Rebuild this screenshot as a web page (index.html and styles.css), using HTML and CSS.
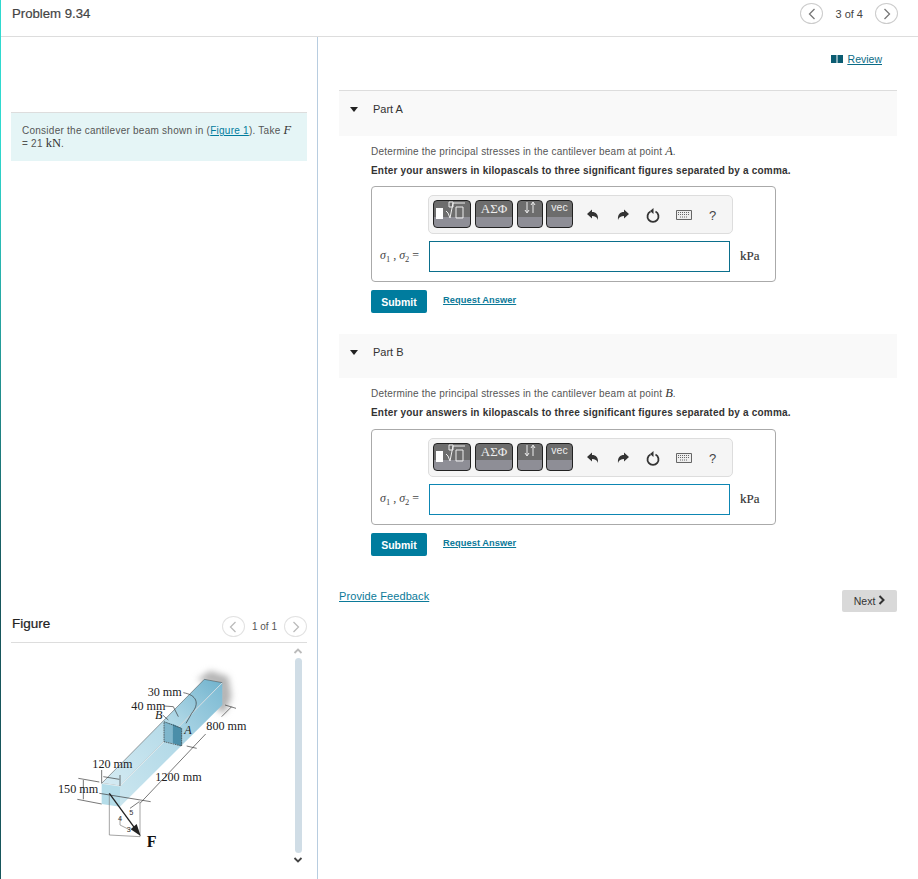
FILE: index.html
```html
<!DOCTYPE html>
<html lang="en">
<head>
<meta charset="utf-8">
<title>Problem 9.34</title>
<link rel="stylesheet" href="styles.css">
</head>
<body>
<div class="app">
  <header class="topbar">
    <h1 class="title">Problem 9.34</h1>
    <nav class="pager">
      <span class="circle"><svg width="8" height="12" viewBox="0 0 8 12"><path d="M6.500 1 1.500 6l5 5" class="chev"/></svg></span>
      <span class="pager-text">3 of 4</span>
      <span class="circle"><svg width="8" height="12" viewBox="0 0 8 12"><path d="M1.500 1l5 5-5 5" class="chev"/></svg></span>
    </nav>
  </header>
  <div class="panes">
    <aside class="left">
      <div class="intro">Consider the cantilever beam shown in (<a href="#" class="link">Figure 1</a>). Take <i class="math big">F</i><br>= 21 <span class="math big">kN</span>.</div>
      <div class="figure-head">
        <h2 class="figure-title">Figure</h2>
        <div class="pager small">
          <span class="circle faint"><svg width="8" height="12" viewBox="0 0 8 12"><path d="M6.500 1 1.500 6l5 5" class="chev light"/></svg></span>
          <span class="pager-text tiny">1 of 1</span>
          <span class="circle faint"><svg width="8" height="12" viewBox="0 0 8 12"><path d="M1.500 1l5 5-5 5" class="chev light"/></svg></span>
        </div>
      </div>
      <div class="figure-body">
        <svg class="beam" width="220" height="200" viewBox="0 0 660 600">
          <defs>
            <filter id="bl" x="-50%" y="-50%" width="200%" height="200%"><feGaussianBlur stdDeviation="9"/></filter>
            <linearGradient id="side" x1="0" y1="1" x2="1" y2="0"><stop offset="0" stop-color="#cbe6ef"/><stop offset="0.5" stop-color="#b4dae8"/><stop offset="1" stop-color="#7cbad3"/></linearGradient>
            <linearGradient id="top" x1="0" y1="1" x2="1" y2="0"><stop offset="0" stop-color="#d5ebf3"/><stop offset="0.6" stop-color="#b2d9e7"/><stop offset="1" stop-color="#6fb2cd"/></linearGradient>
          </defs>
          <path d="M470 60 510 32 565 50 575 110 555 160 530 150 535 75Z" fill="#b4b4b4" filter="url(#bl)"/>
          <path d="M185 370 493 58 547 68 240 378Z" fill="url(#top)" stroke="#444" stroke-width="1.500"/>
          <path d="M240 378 547 68 547 135 240 440Z" fill="url(#side)"/>
          <path d="M185 370 240 378 240 440 185 432Z" fill="#b5dde9"/>
          <path d="M240 378 547 68" stroke="#fff" stroke-width="2" fill="none"/>
          <path d="M185 370 240 378" stroke="#fff" stroke-width="2"/>
          <path d="M372 185 398 192 398 250 372 245Z" fill="#7fb6cc"/>
          <path d="M398 192 425 205 425 258 398 250Z" fill="#4a8ea9"/>
          <path d="M372 185 425 205 425 258 372 245Z" fill="none" stroke="#333" stroke-width="2" stroke-dasharray="5 2"/>
          <g fill="none" stroke="#333" stroke-width="2">
            <path d="M430 98C470 105 480 130 455 160L438 190"/>
            <path d="M372 138 400 140 415 170"/>
            <path d="M368 165 385 180"/>
            <path d="M300 430 497 222"/>
            <path d="M545 170 575 140M555 135 588 145"/>
            <path d="M440 258 470 265"/>
            <path d="M115 355 178 366M112 418 185 432M130 360V418"/>
            <path d="M185 330V370M240 345V378M190 350 238 358"/>
            <path d="M178 400 332 425"/>
            <path d="M270 445 298 425"/>
          </g>
          <g fill="none" stroke="#777" stroke-width="2">
            <path d="M208 400V525L300 530V425"/>
            <path d="M240 470V495L270 510"/>
          </g>
          <path d="M208 400 292 515" stroke="#222" stroke-width="4"/>
          <path d="M302 528 272 508 290 492Z" fill="#222"/>
          <g class="dim">
            <text x="323" y="107">30 mm</text>
            <text x="274" y="149">40 mm</text>
            <text x="345" y="178" font-style="italic">B</text>
            <text x="433" y="223" font-style="italic">A</text>
            <text x="499" y="210">800 mm</text>
            <text x="157" y="325">120 mm</text>
            <text x="346" y="364">1200 mm</text>
            <text x="54" y="399">150 mm</text>
          </g>
          <text class="tiny-num" x="268" y="464">5</text>
          <text class="tiny-num" x="234" y="482">4</text>
          <text class="tiny-num" x="260" y="516">3</text>
          <text class="force" x="320" y="562">F</text>
        </svg>
        <div class="scroll">
          <svg width="10" height="8" viewBox="0 0 10 8"><path d="M1.500 6 5 2.500 8.500 6" class="arrow up"/></svg>
          <span class="thumb"></span>
          <svg width="10" height="8" viewBox="0 0 10 8"><path d="M1.500 2 5 5.500 8.500 2" class="arrow"/></svg>
        </div>
      </div>
    </aside>
    <main class="right">
      <div class="review"><a href="#" class="review-link"><svg class="book" width="12" height="8" viewBox="0 0 12 8"><path d="M0 0h5.500v8H0zM6.500 0H12v8H6.500z" fill="#0b5c72"/></svg><span class="review-text">Review</span></a></div>

      <section class="part">
        <div class="part-head"><span class="tri"></span><span>Part A</span></div>
        <div class="part-body">
          <p class="q">Determine the principal stresses in the cantilever beam at point <i class="math big">A</i>.</p>
          <p class="ins">Enter your answers in kilopascals to three significant figures separated by a comma.</p>
          <div class="answer">
            <div class="toolbar">
              <span class="tb w38"><span class="sq"></span><svg width="24" height="18" viewBox="0 0 24 18"><path d="M5 1h4v5H5zM2 10l2 2 2 5 3-15h12M12 6h7v11h-7z" fill="none" stroke="#eee" stroke-width="1"/></svg></span>
              <span class="tb w38 sym">ΑΣΦ</span>
              <span class="tb w26"><svg width="14" height="14" viewBox="0 0 14 14"><path d="M4 1v10M2 9l2 3 2-3M10 12V2M8 4l2-3 2 3" fill="none" stroke="#eee" stroke-width="1"/></svg></span>
              <span class="tb w27 vec">vec</span>
              <div class="tools">
                <svg width="14" height="14" viewBox="0 0 14 14"><path d="M1 6 6 1.500V4c4 0 6.500 2.500 6 8-1-3-3-4-6-4v2.500Z" fill="#333"/></svg>
                <svg width="14" height="14" viewBox="0 0 14 14"><path d="M13 6 8 1.500V4c-4 0-6.500 2.500-6 8 1-3 3-4 6-4v2.500Z" fill="#333"/></svg>
                <svg width="14" height="16" viewBox="0 0 14 16"><path d="M4.500 4.500a5.500 5.500 0 1 0 5 0" fill="none" stroke="#333" stroke-width="1.800"/><path d="M7.500 1v6L4 4Z" fill="#333"/></svg>
                <svg width="16" height="10" viewBox="0 0 16 10"><path d="M.5.500h15v9H.5z" fill="#eee" stroke="#666"/><path d="M2 2.500h12M2 4.500h12M4 7h8" stroke="#666" stroke-dasharray="1 1"/></svg>
                <span class="help">?</span>
              </div>
            </div>
            <div class="row">
              <span class="label"><i>σ</i><sub>1</sub> , <i>σ</i><sub>2</sub> =</span>
              <input class="field" type="text" aria-label="answer A">
              <span class="unit">kPa</span>
            </div>
          </div>
          <div class="actions"><button class="submit">Submit</button><a href="#" class="req">Request Answer</a></div>
        </div>
      </section>

      <section class="part">
        <div class="part-head"><span class="tri"></span><span>Part B</span></div>
        <div class="part-body">
          <p class="q">Determine the principal stresses in the cantilever beam at point <i class="math big">B</i>.</p>
          <p class="ins">Enter your answers in kilopascals to three significant figures separated by a comma.</p>
          <div class="answer">
            <div class="toolbar">
              <span class="tb w38"><span class="sq"></span><svg width="24" height="18" viewBox="0 0 24 18"><path d="M5 1h4v5H5zM2 10l2 2 2 5 3-15h12M12 6h7v11h-7z" fill="none" stroke="#eee" stroke-width="1"/></svg></span>
              <span class="tb w38 sym">ΑΣΦ</span>
              <span class="tb w26"><svg width="14" height="14" viewBox="0 0 14 14"><path d="M4 1v10M2 9l2 3 2-3M10 12V2M8 4l2-3 2 3" fill="none" stroke="#eee" stroke-width="1"/></svg></span>
              <span class="tb w27 vec">vec</span>
              <div class="tools">
                <svg width="14" height="14" viewBox="0 0 14 14"><path d="M1 6 6 1.500V4c4 0 6.500 2.500 6 8-1-3-3-4-6-4v2.500Z" fill="#333"/></svg>
                <svg width="14" height="14" viewBox="0 0 14 14"><path d="M13 6 8 1.500V4c-4 0-6.500 2.500-6 8 1-3 3-4 6-4v2.500Z" fill="#333"/></svg>
                <svg width="14" height="16" viewBox="0 0 14 16"><path d="M4.500 4.500a5.500 5.500 0 1 0 5 0" fill="none" stroke="#333" stroke-width="1.800"/><path d="M7.500 1v6L4 4Z" fill="#333"/></svg>
                <svg width="16" height="10" viewBox="0 0 16 10"><path d="M.5.500h15v9H.5z" fill="#eee" stroke="#666"/><path d="M2 2.500h12M2 4.500h12M4 7h8" stroke="#666" stroke-dasharray="1 1"/></svg>
                <span class="help">?</span>
              </div>
            </div>
            <div class="row">
              <span class="label"><i>σ</i><sub>1</sub> , <i>σ</i><sub>2</sub> =</span>
              <input class="field focus" type="text" aria-label="answer B">
              <span class="unit">kPa</span>
            </div>
          </div>
          <div class="actions"><button class="submit">Submit</button><a href="#" class="req">Request Answer</a></div>
        </div>
      </section>

      <div class="foot">
        <a href="#" class="feedback">Provide Feedback</a>
        <button class="next">Next <svg width="7" height="10" viewBox="0 0 7 10"><path d="M1.500 1l4 4-4 4" fill="none" stroke="#333" stroke-width="2"/></svg></button>
      </div>
    </main>
  </div>
</div>
</body>
</html>
```

FILE: styles.css
```css
* { box-sizing: border-box; }
html, body { margin: 0; height: 100%; }
body { font-family: "Liberation Sans", Arial, sans-serif; color: #333; background: #fff; overflow: hidden; }
.app { height: 879px; display: flex; flex-direction: column; padding-left: 1px; background: linear-gradient(90deg, transparent 1px, #fff 1px), linear-gradient(#2fd9cf 0, #2fd9cf 140px, #17565c 580px); }
.topbar { height: 37px; flex: none; display: flex; align-items: flex-start; justify-content: space-between; padding: 5px 20px 0 11px; border-bottom: 1px solid #ddd; }
.title { margin: 0; font-size: 13.200px; line-height: 17px; font-weight: 400; color: #444; -webkit-text-stroke: .2px #444; }
.pager { display: flex; align-items: center; gap: 12px; margin-top: -2px; }
.pager-text { font-size: 11px; color: #444; }
.circle { width: 23px; height: 21px; border: 1px solid #ccc; border-radius: 50%; display: flex; align-items: center; justify-content: center; }
.chev { fill: none; stroke: #777; stroke-width: 1.300; }
.panes { flex: 1; display: flex; min-height: 0; }
.left { width: 317px; flex: none; border-right: 1.500px solid #b8cde0; display: flex; flex-direction: column; padding: 75px 10px 0 10px; }
.intro { height: 49px; background: #e5f5f6; border-top: 1px solid #ddd; padding: 11px 11px 0; font-size: 10px; line-height: 12px; letter-spacing: .25px; color: #555; }
.link { color: #007c9e; }
.math { font-family: "Liberation Serif", serif; }
.big { font-size: 12.500px; letter-spacing: 0; color: #333; }
.figure-head { margin-top: 453px; height: 29px; display: flex; align-items: flex-start; justify-content: space-between; border-bottom: 1px solid #ddd; padding-left: 1px; }
.figure-title { margin: 0; font-size: 13.500px; line-height: 19px; font-weight: 400; color: #222; -webkit-text-stroke: .2px #222; }
.small { margin-top: 2px; gap: 7px; }
.tiny { font-size: 10px; color: #555; }
.faint { border-color: #e2e2e2; }
.light { stroke: #bbb; }
.figure-body { flex: 1; display: flex; justify-content: space-between; min-height: 0; }
.beam { margin: 17px 0 0 29px; }
.dim text { font-family: "Liberation Serif", serif; font-size: 36.500px; fill: #222; }
.tiny-num { font-family: "Liberation Sans", sans-serif; font-size: 22px; fill: #333; }
.force { font-family: "Liberation Serif", serif; font-size: 48px; font-weight: 700; fill: #111; }
.scroll { width: 12px; margin: 4px 3px 0 0; display: flex; flex-direction: column; align-items: center; gap: 3px; }
.thumb { width: 7px; height: 195px; background: #d0dde6; border-radius: 4px; }
.arrow { fill: none; stroke: #444; stroke-width: 1.800; }
.arrow.up { stroke: #bbb; }
.right { flex: 1; min-width: 0; padding: 15px 21px 0 21px; }
.review { display: flex; justify-content: flex-end; height: 38px; padding-right: 15px; }
.review-link { display: flex; align-items: center; font-size: 10.500px; color: #0b6b86; height: 14px; text-decoration: underline; }
.book { margin-right: 5px; }
.review-text { text-decoration: underline; }
.part { margin-bottom: 20px; }
.part-head { height: 46px; background: #f9f9f9; border-top: 1px solid #ddd; display: flex; align-items: flex-start; padding: 12px 0 0 11px; gap: 15px; font-size: 11px; line-height: 13px; color: #333; }
.part:nth-of-type(2) .part-head { border-top-color: #f9f9f9; height: 44px; padding-top: 11px; }
.tri { width: 0; height: 0; margin-top: 4px; border-left: 4px solid transparent; border-right: 4px solid transparent; border-top: 5px solid #222; }
.part-body { padding-left: 32px; }
.q { margin: 8px 0 0; height: 14px; font-size: 10px; line-height: 14px; letter-spacing: .19px; color: #555; white-space: nowrap; }
.ins { margin: 7px 0 9px; height: 12px; font-size: 10px; line-height: 12px; letter-spacing: .2px; font-weight: 700; color: #333; white-space: nowrap; }
.part:nth-of-type(2) .ins { margin-bottom: 10px; }
.answer { width: 405px; height: 96px; border: 1px solid #aaa; border-radius: 4px; padding: 8px 0 0 56px; }
.toolbar { width: 305px; height: 39px; background: #f5f5f5; border: 1px solid #ddd; border-radius: 5px; display: flex; align-items: flex-start; padding: 4px 0 0 4px; gap: 4px; }
.tb { height: 28px; border: 1px solid #222; border-radius: 4px; background: linear-gradient(#6d6d6d 0 60%, #8e8e96 60% 100%); display: flex; align-items: flex-start; justify-content: center; color: #eee; }
.w38 { width: 38px; }
.w26 { width: 26px; }
.w27 { width: 27px; margin-left: -1px; }
.sq { width: 7px; height: 11px; background: #fff; margin: 7px 1px 0 0; }
.sym { font-family: "Liberation Serif", serif; font-size: 13px; line-height: 15px; }
.vec { font-size: 10.500px; line-height: 12px; }
.tools { display: flex; align-items: center; gap: 16px; margin-left: 9px; height: 30px; }
.help { font-size: 13px; color: #444; margin-left: 1px; }
.row { display: flex; align-items: center; margin: 7px 0 0 -48px; }
.label { width: 48px; font-family: "Liberation Serif", serif; font-size: 12px; color: #444; white-space: nowrap; }
.label sub { font-size: 8.500px; }
.field { width: 301px; height: 31px; border: 1px solid #0b6f8c; background: #fff; margin: 0 1px; }
.field.focus { border-color: #0d86b3; }
.unit { margin-left: 9px; font-family: "Liberation Serif", serif; font-size: 13px; color: #333; margin-top: -1px; -webkit-text-stroke: .15px #333; }
.actions { display: flex; align-items: flex-start; gap: 16px; margin-top: 8px; height: 24px; }
.submit { width: 56px; height: 23px; background: #007c9e; color: #fff; border: 0; border-radius: 2px; font: 700 10.500px "Liberation Sans", sans-serif; padding: 0; }
.req { font-size: 9.300px; font-weight: 700; letter-spacing: .05px; color: #0c7a99; margin-top: 5px; }
.foot { display: flex; justify-content: space-between; align-items: flex-start; margin-top: 33px; }
.feedback { font-size: 11px; letter-spacing: .1px; color: #0c7a99; }
.next { width: 55px; height: 22px; border: 0; border-radius: 2px; background: #d9d9d9; color: #333; font: 10.500px "Liberation Sans", sans-serif; padding: 0; }
```
